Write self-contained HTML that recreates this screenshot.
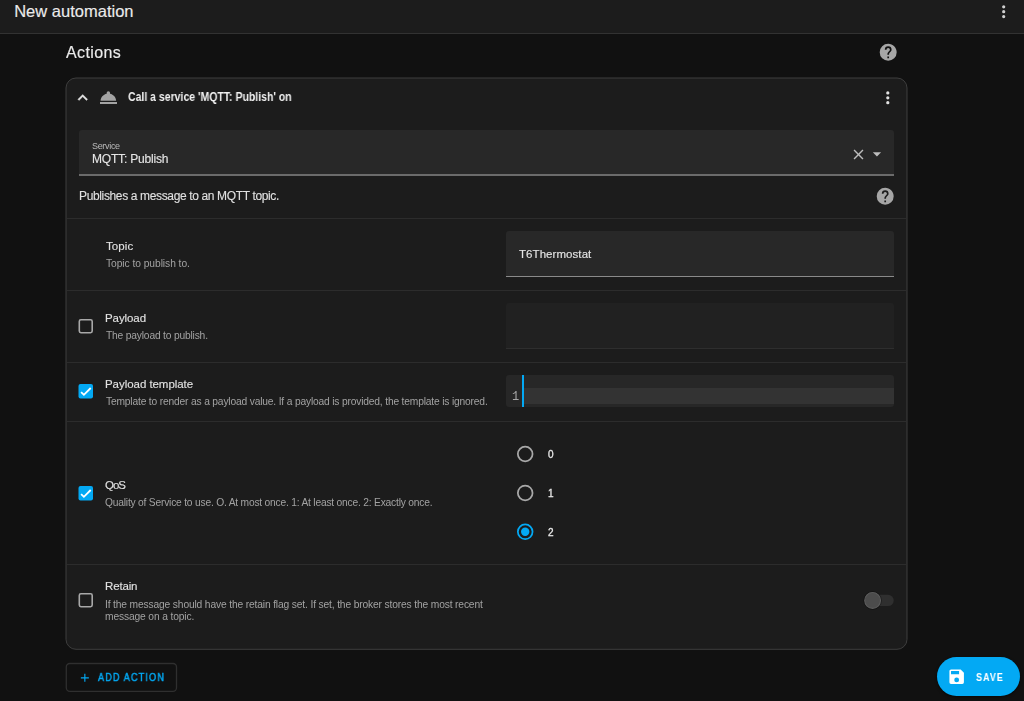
<!DOCTYPE html>
<html><head><meta charset="utf-8"><style>
html,body{margin:0;padding:0;}
body{width:1024px;height:701px;overflow:hidden;background:#111111;position:relative;font-family:"Liberation Sans", sans-serif;}
.a{position:absolute;box-sizing:border-box;}
.t{position:absolute;white-space:nowrap;font-family:"Liberation Sans", sans-serif;will-change:transform;}
</style></head><body>
<div class="a" style="left:0;top:0;width:1024px;height:34px;background:#1c1c1c;border-bottom:1px solid #323232;"></div>
<svg class="a" style="left:994.0px;top:2.0px;" width="19.4" height="19.4" viewBox="0 0 24 24"><path fill="#cfcfcf" d="M12,16A2,2 0 0,1 14,18A2,2 0 0,1 12,20A2,2 0 0,1 10,18A2,2 0 0,1 12,16M12,10A2,2 0 0,1 14,12A2,2 0 0,1 12,14A2,2 0 0,1 10,12A2,2 0 0,1 12,10M12,4A2,2 0 0,1 14,6A2,2 0 0,1 12,8A2,2 0 0,1 10,6A2,2 0 0,1 12,4Z"/></svg>
<svg class="a" style="left:0;top:0;" width="1024" height="701"><rect x="66" y="78" width="841" height="571.3" rx="10" ry="10" fill="#1c1c1c" stroke="#3e3e3e" stroke-width="1"/></svg>
<div class="a" style="left:67px;top:218px;width:839px;height:1px;background:#2c2c2c;"></div>
<div class="a" style="left:67px;top:290px;width:839px;height:1px;background:#2c2c2c;"></div>
<div class="a" style="left:67px;top:362px;width:839px;height:1px;background:#2c2c2c;"></div>
<div class="a" style="left:67px;top:421px;width:839px;height:1px;background:#2c2c2c;"></div>
<div class="a" style="left:67px;top:564px;width:839px;height:1px;background:#2c2c2c;"></div>
<!-- help icon top -->
<svg class="a" style="left:877.8px;top:42.3px;" width="20.4" height="20.4" viewBox="0 0 24 24"><path fill="#a6a6a6" d="M15.07,11.25L14.17,12.17C13.45,12.89 13,13.5 13,15H11V14.5C11,13.39 11.45,12.39 12.17,11.67L13.41,10.41C13.78,10.05 14,9.55 14,9C14,7.89 13.1,7 12,7A2,2 0 0,0 10,9H8A4,4 0 0,1 12,5A4,4 0 0,1 16,9C16,9.88 15.64,10.67 15.07,11.25M13,19H11V17H13M12,2A10,10 0 0,0 2,12A10,10 0 0,0 12,22A10,10 0 0,0 22,12C22,6.47 17.5,2 12,2Z"/></svg>
<!-- chevron up -->
<svg class="a" style="left:72.8px;top:87.9px;" width="19.44" height="19.44" viewBox="0 0 24 24"><path fill="#e1e1e1" stroke="#e1e1e1" stroke-width="0.45" d="M7.41,15.41L12,10.83L16.59,15.41L18,14L12,8L6,14L7.41,15.41Z"/></svg>
<!-- room service -->
<svg class="a" style="left:98.11px;top:87.18px;" width="20.74" height="20.74" viewBox="0 0 24 24"><path fill="#a3a3a3" d="M12,5A2,2 0 0,1 14,7C14,7.24 13.96,7.47 13.88,7.69C17.95,8.5 21,11.91 21,16H3C3,11.91 6.05,8.5 10.12,7.69C10.04,7.47 10,7.24 10,7A2,2 0 0,1 12,5Z"/></svg>
<div class="a" style="left:99.9px;top:102px;width:16.8px;height:1.7px;background:#a3a3a3;"></div>
<!-- card dots -->
<svg class="a" style="left:877.8px;top:87.9px;" width="19.6" height="19.6" viewBox="0 0 24 24"><path fill="#e1e1e1" d="M12,16A2,2 0 0,1 14,18A2,2 0 0,1 12,20A2,2 0 0,1 10,18A2,2 0 0,1 12,16M12,10A2,2 0 0,1 14,12A2,2 0 0,1 12,14A2,2 0 0,1 10,12A2,2 0 0,1 12,10M12,4A2,2 0 0,1 14,6A2,2 0 0,1 12,8A2,2 0 0,1 10,6A2,2 0 0,1 12,4Z"/></svg>
<!-- service select -->
<div class="a" style="left:79px;top:130px;width:815px;height:46px;background:#282828;border-radius:3px 3px 0 0;border-bottom:2px solid #6b6b6b;"></div>
<svg class="a" style="left:850.4px;top:146.1px;" width="17" height="17" viewBox="0 0 24 24"><path fill="#bdbdbd" d="M19,6.41L17.59,5L12,10.59L6.41,5L5,6.41L10.59,12L5,17.59L6.41,19L12,13.41L17.59,19L19,17.59L13.41,12L19,6.41Z"/></svg>
<svg class="a" style="left:867px;top:143.6px;" width="19.9" height="19.9" viewBox="0 0 24 24"><path fill="#bdbdbd" d="M7,10L12,15L17,10H7Z"/></svg>
<!-- help icon 2 -->
<svg class="a" style="left:875.4px;top:186.2px;" width="20.4" height="20.4" viewBox="0 0 24 24"><path fill="#a6a6a6" d="M15.07,11.25L14.17,12.17C13.45,12.89 13,13.5 13,15H11V14.5C11,13.39 11.45,12.39 12.17,11.67L13.41,10.41C13.78,10.05 14,9.55 14,9C14,7.89 13.1,7 12,7A2,2 0 0,0 10,9H8A4,4 0 0,1 12,5A4,4 0 0,1 16,9C16,9.88 15.64,10.67 15.07,11.25M13,19H11V17H13M12,2A10,10 0 0,0 2,12A10,10 0 0,0 12,22A10,10 0 0,0 22,12C22,6.47 17.5,2 12,2Z"/></svg>
<!-- topic field -->
<div class="a" style="left:506px;top:231px;width:388px;height:46px;background:#282828;border-radius:3px 3px 0 0;border-bottom:1px solid #8a8a8a;"></div>
<!-- payload field disabled -->
<div class="a" style="left:506px;top:303px;width:388px;height:46px;background:#212121;border-radius:3px 3px 0 0;border-bottom:1px solid #2e2e2e;"></div>
<!-- code editor -->
<div class="a" style="left:506px;top:375px;width:388px;height:32px;background:#272727;border-radius:3px;"></div>
<div class="a" style="left:524px;top:388px;width:370px;height:16px;background:#333333;"></div>
<div class="a" style="left:522px;top:375px;width:2px;height:32px;background:#03a9f4;"></div>
<div class="a" style="left:512.4px;top:389.2px;font-family:'Liberation Mono',monospace;font-size:12px;line-height:16px;color:#a8a8a8;will-change:transform;">1</div>
<!-- checkboxes -->
<svg class="a" style="left:74px;top:314px;" width="24" height="24" viewBox="0 0 24 24"><rect x="5.3" y="5.8" width="12.9" height="12.9" rx="1.6" fill="none" stroke="#a8a8a8" stroke-width="1.6"/></svg>
<svg class="a" style="left:74px;top:379.4px;" width="24" height="24" viewBox="0 0 24 24"><rect x="4.5" y="5" width="14.5" height="14.5" rx="2" fill="#03a9f4"/><path d="M7.1 13.1 L9.9 15.8 L16.7 9.0" fill="none" stroke="#fff" stroke-width="1.8"/></svg>
<svg class="a" style="left:74px;top:480.6px;" width="24" height="24" viewBox="0 0 24 24"><rect x="4.5" y="5" width="14.5" height="14.5" rx="2" fill="#03a9f4"/><path d="M7.1 13.1 L9.9 15.8 L16.7 9.0" fill="none" stroke="#fff" stroke-width="1.8"/></svg>
<svg class="a" style="left:74px;top:588.3px;" width="24" height="24" viewBox="0 0 24 24"><rect x="5.3" y="5.8" width="12.9" height="12.9" rx="1.6" fill="none" stroke="#a8a8a8" stroke-width="1.6"/></svg>
<!-- radios -->
<svg class="a" style="left:513px;top:442px;" width="25" height="104" viewBox="0 0 25 104"><g fill="none" stroke-width="1.75"><circle cx="12.2" cy="12.0" r="7.35" stroke="#a8a8a8"/><circle cx="12.2" cy="50.95" r="7.35" stroke="#a8a8a8"/><circle cx="12.2" cy="89.8" r="7.35" stroke="#03a9f4"/></g><circle cx="12.2" cy="89.8" r="4.2" fill="#03a9f4"/></svg>
<!-- toggle -->
<svg class="a" style="left:858px;top:586px;" width="42" height="28" viewBox="0 0 42 28"><rect x="12" y="8.8" width="23.7" height="11.3" rx="5.65" fill="#2f2f2f"/><circle cx="14.6" cy="14.45" r="9.2" fill="rgba(0,0,0,0.4)"/><circle cx="14.6" cy="14.45" r="7.9" fill="#4c4c4c" stroke="#5b5b5b" stroke-width="1.1"/></svg>

<!-- add action -->
<svg class="a" style="left:60px;top:657px;" width="124" height="42" viewBox="0 0 124 42"><rect x="6.3" y="6.5" width="110.2" height="27.8" rx="3.5" fill="none" stroke="#2f2f2f" stroke-width="1.3"/></svg>
<svg class="a" style="left:78.1px;top:670.6px;" width="13.7" height="13.7" viewBox="0 0 24 24"><path fill="#03a9f4" d="M19,13H13V19H11V13H5V11H11V5H13V11H19V13Z"/></svg>
<!-- save fab -->
<div class="a" style="left:937px;top:657px;width:83px;height:39px;background:#03a9f4;border-radius:20px;box-shadow:0 1px 3px rgba(0,0,0,.6);"></div>
<svg class="a" style="left:947px;top:666.7px;" width="19.33" height="19.33" viewBox="0 0 24 24"><path fill="#fff" d="M15,9H5V5H15M12,19A3,3 0 0,1 9,16A3,3 0 0,1 12,13A3,3 0 0,1 15,16A3,3 0 0,1 12,19M17,3H5C3.89,3 3,3.9 3,5V19A2,2 0 0,0 5,21H19A2,2 0 0,0 21,19V7L17,3Z"/></svg>

<div class="t" style="left:14.20px;top:2.01px;font-size:16.5px;line-height:19.8px;color:#ebebeb;font-weight:400;will-change:auto;-webkit-text-stroke:0.15px #ebebeb;letter-spacing:0.008px;">New automation</div><div class="t" style="left:65.80px;top:43.00px;font-size:16px;line-height:19.2px;color:#ebebeb;font-weight:400;-webkit-text-stroke:0.15px #ebebeb;letter-spacing:0.400px;">Actions</div><div class="t" style="left:127.90px;top:90.01px;font-size:12px;line-height:14.4px;color:#f2f2f2;font-weight:700;transform:scaleX(0.8743);transform-origin:0 0;">Call a service 'MQTT: Publish' on</div><div class="t" style="left:92.30px;top:141.01px;font-size:9px;line-height:10.8px;color:#bababa;font-weight:400;letter-spacing:-0.317px;">Service</div><div class="t" style="left:91.50px;top:152.00px;font-size:12px;line-height:14.4px;color:#e6e6e6;font-weight:400;-webkit-text-stroke:0.12px #e6e6e6;letter-spacing:-0.183px;">MQTT: Publish</div><div class="t" style="left:78.70px;top:189.02px;font-size:12px;line-height:14.4px;color:#e1e1e1;font-weight:400;-webkit-text-stroke:0.1px #e1e1e1;letter-spacing:-0.358px;">Publishes a message to an MQTT topic.</div><div class="t" style="left:105.80px;top:240.00px;font-size:11.5px;line-height:13.8px;color:#e1e1e1;font-weight:400;-webkit-text-stroke:0.12px #e1e1e1;letter-spacing:0.075px;">Topic</div><div class="t" style="left:105.80px;top:258.01px;font-size:10.25px;line-height:12.3px;color:#a2a2a2;font-weight:400;letter-spacing:-0.053px;">Topic to publish to.</div><div class="t" style="left:519.30px;top:248.01px;font-size:11.5px;line-height:13.8px;color:#e6e6e6;font-weight:400;-webkit-text-stroke:0.12px #e6e6e6;letter-spacing:0.064px;">T6Thermostat</div><div class="t" style="left:104.60px;top:312.00px;font-size:11.5px;line-height:13.8px;color:#e1e1e1;font-weight:400;-webkit-text-stroke:0.12px #e1e1e1;letter-spacing:-0.083px;">Payload</div><div class="t" style="left:105.60px;top:330.00px;font-size:10.25px;line-height:12.3px;color:#a2a2a2;font-weight:400;letter-spacing:-0.182px;">The payload to publish.</div><div class="t" style="left:104.50px;top:378.00px;font-size:11.5px;line-height:13.8px;color:#e1e1e1;font-weight:400;-webkit-text-stroke:0.12px #e1e1e1;letter-spacing:-0.047px;">Payload template</div><div class="t" style="left:105.50px;top:396.01px;font-size:10.25px;line-height:12.3px;color:#a2a2a2;font-weight:400;letter-spacing:-0.175px;">Template to render as a payload value. If a payload is provided, the template is ignored.</div><div class="t" style="left:105.40px;top:479.00px;font-size:11.5px;line-height:13.8px;color:#e1e1e1;font-weight:400;-webkit-text-stroke:0.12px #e1e1e1;letter-spacing:-1.000px;">QoS</div><div class="t" style="left:105.00px;top:497.01px;font-size:10.25px;line-height:12.3px;color:#a2a2a2;font-weight:400;letter-spacing:-0.208px;">Quality of Service to use. O. At most once. 1: At least once. 2: Exactly once.</div><div class="t" style="left:104.70px;top:580.00px;font-size:11.5px;line-height:13.8px;color:#e1e1e1;font-weight:400;-webkit-text-stroke:0.12px #e1e1e1;letter-spacing:-0.160px;">Retain</div><div class="t" style="left:104.70px;top:599.00px;font-size:10.25px;line-height:12.3px;color:#a2a2a2;font-weight:400;letter-spacing:-0.148px;">If the message should have the retain flag set. If set, the broker stores the most recent</div><div class="t" style="left:105.20px;top:611.01px;font-size:10.25px;line-height:12.3px;color:#a2a2a2;font-weight:400;letter-spacing:-0.136px;">message on a topic.</div><div class="t" style="left:548.00px;top:449.00px;font-size:10px;line-height:12.0px;color:#e8e8e8;font-weight:400;-webkit-text-stroke:0.3px #e8e8e8;">0</div><div class="t" style="left:548.00px;top:488.00px;font-size:10px;line-height:12.0px;color:#e8e8e8;font-weight:400;-webkit-text-stroke:0.3px #e8e8e8;">1</div><div class="t" style="left:548.00px;top:527.00px;font-size:10px;line-height:12.0px;color:#e8e8e8;font-weight:400;-webkit-text-stroke:0.3px #e8e8e8;">2</div><div class="t" style="left:97.80px;top:671.01px;font-size:10.5px;line-height:12.6px;color:#03a9f4;font-weight:400;-webkit-text-stroke:0.45px #03a9f4;letter-spacing:1.200px;transform:scaleX(0.8780);transform-origin:0 0;">ADD ACTION</div><div class="t" style="left:975.90px;top:671.00px;font-size:10.5px;line-height:12.6px;color:#ffffff;font-weight:700;letter-spacing:1.000px;transform:scaleX(0.8742);transform-origin:0 0;">SAVE</div>
</body></html>
